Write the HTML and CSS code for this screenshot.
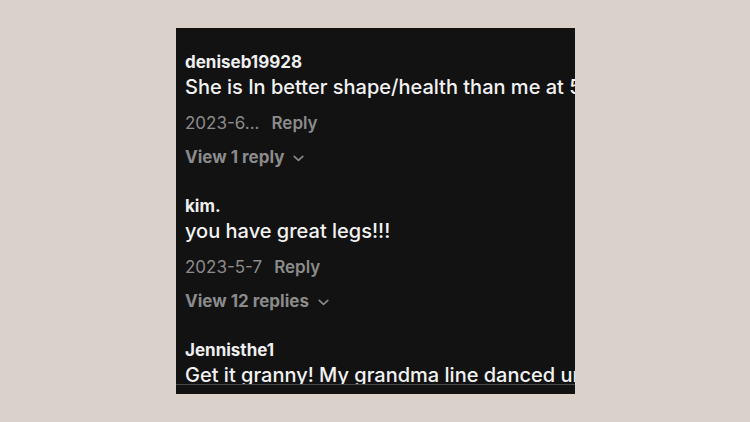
FILE: index.html
```html
<!DOCTYPE html>
<html lang="en">
<head>
<meta charset="utf-8">
<title>Comments</title>
<link rel="stylesheet" href="styles.css">
</head>
<body>
<div class="stage">
  <div class="panel">
    <div class="list">
      <div class="comment">
        <div class="user">deniseb19928</div>
        <div class="text">She is In better shape/health than me at 55!</div>
        <div class="meta"><span class="date">2023-6...</span><span class="reply">Reply</span></div>
        <div class="view">View 1 reply <svg class="chev" width="11" height="7" viewBox="0 0 11 7"><path d="M1.2 1.3 L5.5 5.3 L9.8 1.3" fill="none" stroke="currentColor" stroke-width="1.6" stroke-linecap="round" stroke-linejoin="round"/></svg></div>
      </div>
      <div class="comment">
        <div class="user">kim.</div>
        <div class="text">you have great legs!!!</div>
        <div class="meta"><span class="date">2023-5-7</span><span class="reply">Reply</span></div>
        <div class="view">View 12 replies <svg class="chev" width="11" height="7" viewBox="0 0 11 7"><path d="M1.2 1.3 L5.5 5.3 L9.8 1.3" fill="none" stroke="currentColor" stroke-width="1.6" stroke-linecap="round" stroke-linejoin="round"/></svg></div>
      </div>
      <div class="comment">
        <div class="user">Jennisthe1</div>
        <div class="text">Get it granny! My grandma line danced until she was 90!</div>
      </div>
    </div>
    <div class="footer"></div>
  </div>
</div>
</body>
</html>
```
FILE: styles.css
```css
* { box-sizing: border-box; }
html, body { margin: 0; padding: 0; }
body {
  background: #d9d1ca;
  width: 750px;
  height: 422px;
  font-family: Inter, "Noto Sans", sans-serif;
}
.stage {
  padding-top: 28px;
  padding-left: 176px;
}
.panel {
  width: 399px;
  height: 366px;
  background: #121212;
  display: flex;
  flex-direction: column;
}
.list {
  height: 357px;
  overflow: hidden;
  padding: 24px 0 0 9px;
  border-bottom: 1px solid #4a4a4a;
}
.footer { flex: 1; }
.comment { margin-bottom: 27px; white-space: nowrap; }
.user {
  font-size: 17px;
  line-height: 20px;
  font-weight: 700;
  color: #efefef;
}
.text {
  font-size: 20px;
  line-height: 31px;
  font-weight: 500;
  color: #f2f2f2;
}
.meta {
  margin-top: 8px;
  font-size: 17px;
  line-height: 24px;
  color: #8b8b8b;
  display: flex;
  gap: 12px;
}
.reply { font-weight: 600; }
.view {
  margin-top: 10px;
  font-size: 17px;
  line-height: 24px;
  font-weight: 700;
  color: #8b8b8b;
  display: flex;
  align-items: center;
  gap: 9px;
}
.chev { margin-top: 2px; }
```
